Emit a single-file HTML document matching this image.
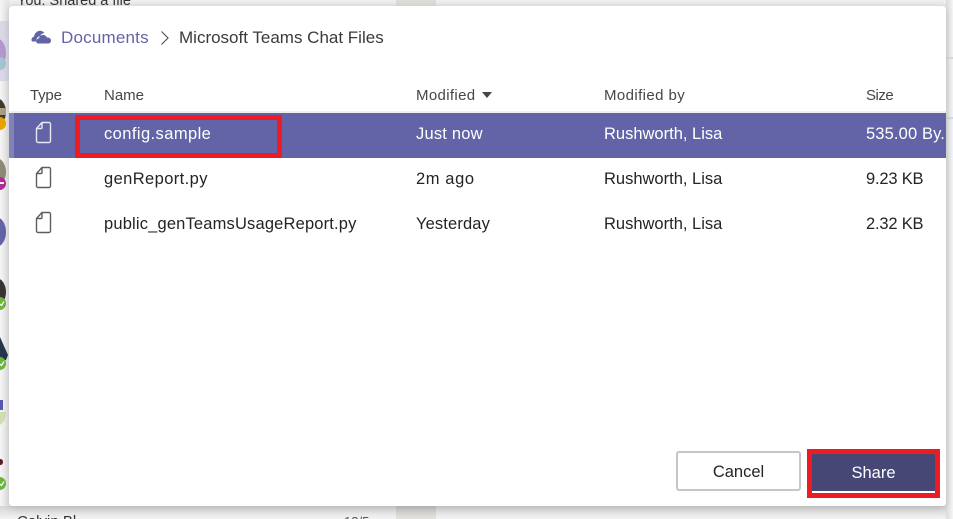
<!DOCTYPE html>
<html style="height:519px;overflow:hidden"><head><meta charset="utf-8">
<style>
html,body{margin:0;padding:0}
body{width:953px;height:519px;overflow:hidden;background:#ebebeb;font-family:"Liberation Sans",sans-serif;color:#252423}
#p{position:absolute;left:0;top:0;width:953px;height:519px;overflow:hidden}
.a{position:absolute;white-space:nowrap}
.t{font-size:16.5px;line-height:20px}
.h{font-size:15px;line-height:18px;color:#484644;top:87px}
.w{color:#fff}
.b{width:13px;height:13px;border-radius:50%;left:-7px}
</style></head><body><div id="p">
<!-- background -->
<div class="a" style="left:0;top:0;width:953px;height:6px;background:linear-gradient(#f0f0f0,#e6e6e6)"></div>
<div class="a" style="left:396px;top:0;width:40px;height:519px;background:#dedcd9"></div>
<div class="a" style="left:0;top:0;width:9px;height:519px;background:linear-gradient(90deg,#f5f5f5,#e2e2e2)"></div>
<div class="a" style="left:0;top:506px;width:953px;height:13px;background:linear-gradient(#d6d6d6,#f3f3f3)"></div>
<div class="a" style="left:396px;top:506px;width:40px;height:13px;background:linear-gradient(#c8c6c3,#e4e2df)"></div>
<div class="a" style="left:946px;top:0;width:7px;height:519px;background:linear-gradient(90deg,#dcdcdc,#f5f5f5)"></div>
<div class="a" style="left:946px;top:57px;width:7px;height:2px;background:#d8d8d8"></div>
<div class="a" style="left:946px;top:117px;width:7px;height:2px;background:#d8d8d8"></div>
<div class="a" style="left:17px;top:-7px;font-size:14.5px;line-height:16px;color:#333">You: Shared a file</div>
<div class="a" style="left:17px;top:514px;font-size:15px;line-height:16px;color:#333">Calvin Bl</div>
<div class="a" style="left:344px;top:514px;font-size:13px;line-height:16px;color:#555">12/5</div>
<!-- avatars -->
<div class="a" style="left:0;top:21px;width:9px;height:60px;background:#d9d8e6"></div>
<div class="a" style="left:-14px;top:38px;width:20px;height:30px;background:#b497cf;border-radius:50%"></div>
<div class="a" style="left:-6px;top:57px;width:12px;height:13px;background:#a8c3cf;border-radius:50%"></div>
<div class="a" style="left:-14px;top:98px;width:20px;height:28px;background:#3e3a2e;border-radius:50%"></div>
<div class="a" style="left:0;top:108px;width:6px;height:7px;background:#a5a07f"></div>
<div class="a b" style="top:117px;background:#eaa300"></div>
<div class="a" style="left:-14px;top:158px;width:20px;height:28px;background:#8a8a76;border-radius:50%"></div>
<div class="a b" style="top:177px;background:#b4269a"></div>
<div class="a" style="left:0;top:182px;width:4px;height:2px;background:#fff"></div>
<div class="a" style="left:-14px;top:217px;width:20px;height:30px;background:#6264a7;border-radius:50%"></div>
<div class="a" style="left:-14px;top:278px;width:20px;height:28px;background:#3a3330;border-radius:50%"></div>
<div class="a b" style="top:297px;background:#6bb73a"></div>
<svg class="a" style="left:0;top:335px" width="9" height="26"><path d="M0 2L8 20 6 25H0z" fill="#25364d"/></svg>
<div class="a b" style="top:357px;background:#6bb73a"></div>
<div class="a" style="left:0;top:400px;width:3px;height:10px;background:#5558b0"></div>
<svg class="a" style="left:0;top:412px" width="7" height="14"><path d="M0 0H6C6 6 4 10 0 13z" fill="#cfdeb0"/></svg>
<div class="a b" style="top:477px;background:#6bb73a"></div>
<div class="a" style="left:-2px;top:459px;width:5px;height:6px;background:#5a1f22;border-radius:50%"></div>
<svg class="a" style="left:0;top:297px" width="6" height="193" fill="none" stroke="#fff" stroke-width="1.200"><path d="M0 7l1.500 1.500L4 4.500M0 67l1.500 1.500L4 64.500M0 187l1.500 1.500L4 184.500"/></svg>
<!-- dialog -->
<div class="a" style="left:9px;top:6px;width:937px;height:500px;background:#fff;border-radius:4px;box-shadow:0 2px 8px rgba(0,0,0,.16)"></div>
<svg class="a" style="left:31px;top:29px" width="21" height="16" viewBox="0 0 21 16"><path fill="#6264a7" d="M1 12.500C-.2 10.500 1 8 3 7.600 3.800 3.500 7 1.500 9.500 1.800c1.700.2 3 1 3.800 2.200-2 .3-3.700 1.500-4.400 3.300C6.600 7.600 5 9.800 5.400 12.500z"/><path fill="#6264a7" d="M7 14.500c-1.500-.3-2-1.700-1.700-3 .3-1.300 1.400-2.200 2.700-2.300.4-2 2.200-3.400 4.200-3.300 1.800.1 3.200 1.200 3.700 2.700 2-.4 4.100.8 4.100 3 0 1.700-1.200 2.900-2.800 2.900z"/></svg>
<div class="a t" style="left:61px;top:28px;color:#6264a7;font-size:17px;letter-spacing:.2px">Documents</div>
<svg class="a" style="left:159px;top:30px" width="12" height="16" viewBox="0 0 12 16"><path d="M2.500 1.500 9 8l-6.500 6.500" fill="none" stroke="#555" stroke-width="1.200"/></svg>
<div class="a t" style="left:179px;top:28px;font-size:17px;color:#3b3a39">Microsoft Teams Chat Files</div>

<div class="a h" style="left:30px;letter-spacing:-.2px">Type</div>
<div class="a h" style="left:104px">Name</div>
<div class="a h" style="left:416px;letter-spacing:.35px">Modified</div>
<svg class="a" style="left:482px;top:92px" width="10" height="6"><path d="M0 0h10L5 6z" fill="#484644"/></svg>
<div class="a h" style="left:604px;letter-spacing:.4px">Modified by</div>
<div class="a h" style="left:866px;letter-spacing:-.5px">Size</div>
<div class="a" style="left:9px;top:111px;width:937px;height:2px;background:#f0f0f0"></div>

<div class="a" style="left:9px;top:113px;width:937px;height:45px;background:#6264a7"></div>
<div class="a" style="left:9px;top:113px;width:5px;height:45px;background:#8183b9"></div>

<svg class="a" style="left:35px;top:121px" width="17" height="23" viewBox="0 0 17 23"><path d="M7 1.500h7a1.500 1.500 0 0 1 1.500 1.500v17a1.500 1.500 0 0 1-1.500 1.500H3A1.500 1.500 0 0 1 1.500 20V7.500z M1.500 7.500H6A1 1 0 0 0 7 6.500v-5" fill="none" stroke="#e8e8f4" stroke-width="1.400"/></svg>
<svg class="a" style="left:35px;top:166px" width="17" height="23" viewBox="0 0 17 23"><path d="M7 1.500h7a1.500 1.500 0 0 1 1.500 1.500v17a1.500 1.500 0 0 1-1.500 1.500H3A1.500 1.500 0 0 1 1.500 20V7.500z M1.500 7.500H6A1 1 0 0 0 7 6.500v-5" fill="none" stroke="#605e5c" stroke-width="1.400"/></svg>
<svg class="a" style="left:35px;top:211px" width="17" height="23" viewBox="0 0 17 23"><path d="M7 1.500h7a1.500 1.500 0 0 1 1.500 1.500v17a1.500 1.500 0 0 1-1.500 1.500H3A1.500 1.500 0 0 1 1.500 20V7.500z M1.500 7.500H6A1 1 0 0 0 7 6.500v-5" fill="none" stroke="#605e5c" stroke-width="1.400"/></svg>

<div class="a t w" style="left:104px;top:124px;letter-spacing:.42px">config.sample</div>
<div class="a t w" style="left:416px;top:124px;letter-spacing:.2px">Just now</div>
<div class="a t w" style="left:604px;top:124px">Rushworth, Lisa</div>
<div class="a t w" style="left:866px;top:124px;letter-spacing:.13px">535.00 By.</div>

<div class="a t" style="left:104px;top:169px;letter-spacing:.4px">genReport.py</div>
<div class="a t" style="left:416px;top:169px;letter-spacing:.6px">2m ago</div>
<div class="a t" style="left:604px;top:169px">Rushworth, Lisa</div>
<div class="a t" style="left:866px;top:169px;letter-spacing:-.2px">9.23 KB</div>

<div class="a t" style="left:104px;top:214px;letter-spacing:.17px">public_genTeamsUsageReport.py</div>
<div class="a t" style="left:416px;top:214px;letter-spacing:.13px">Yesterday</div>
<div class="a t" style="left:604px;top:214px">Rushworth, Lisa</div>
<div class="a t" style="left:866px;top:214px;letter-spacing:-.2px">2.32 KB</div>

<div class="a" style="left:75px;top:115px;width:197px;height:33px;border:5px solid #ed1c24"></div>

<div class="a" style="left:676px;top:451px;width:121px;height:36px;border:2px solid #c8c6c4;border-radius:3px;background:#fff;text-align:center;font-size:16.5px;line-height:39px;color:#252423">Cancel</div>
<div class="a" style="left:807px;top:449px;width:123px;height:39px;border:5px solid #ed1c24;background:#464775"></div>
<div class="a" style="left:812px;top:491px;width:123px;height:2px;background:#fff"></div>
<div class="a" style="left:812px;top:454px;width:123px;height:37px;text-align:center;font-size:16.5px;line-height:38px;color:#fff">Share</div>
</div></body></html>
